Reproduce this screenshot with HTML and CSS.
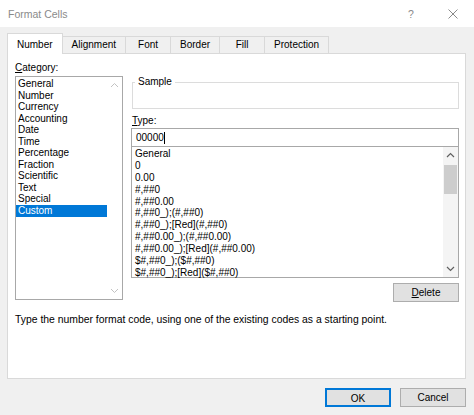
FILE: index.html
```html
<!DOCTYPE html>
<html lang="en">
<head>
<meta charset="utf-8">
<title>Format Cells</title>
<link rel="stylesheet" href="styles.css">
</head>
<body>
<div class="dialog">
  <div class="titlebar">
    <span class="title">Format Cells</span>
    <span class="tb-btn">?</span>
    <span class="tb-btn">
      <svg width="10" height="10" viewBox="0 0 10 10"><path d="M0.5 0.5 L9.5 9.5 M9.5 0.5 L0.5 9.5" stroke="#8a8a8a" stroke-width="1" fill="none"/></svg>
    </span>
  </div>

  <div class="tabs">
    <div class="tab active">Number</div>
    <div class="tab">Alignment</div>
    <div class="tab">Font</div>
    <div class="tab">Border</div>
    <div class="tab">Fill</div>
    <div class="tab">Protection</div>
  </div>

  <div class="panel">
    <div class="columns">
      <div class="col-left">
        <div class="label"><u>C</u>ategory:</div>
        <div class="listbox cat">
          <ul class="items">
            <li>General</li>
            <li>Number</li>
            <li>Currency</li>
            <li>Accounting</li>
            <li>Date</li>
            <li>Time</li>
            <li>Percentage</li>
            <li>Fraction</li>
            <li>Scientific</li>
            <li>Text</li>
            <li>Special</li>
            <li class="selected">Custom</li>
          </ul>
          <div class="vscroll plain">
            <svg class="arrow" width="9" height="6" viewBox="0 0 9 6"><polyline points="1,5 4.5,1.5 8,5" fill="none" stroke="#c2c2c2" stroke-width="1"/></svg>
            <div class="track"></div>
            <svg class="arrow" width="9" height="6" viewBox="0 0 9 6"><polyline points="1,1 4.5,4.5 8,1" fill="none" stroke="#c2c2c2" stroke-width="1"/></svg>
          </div>
        </div>
      </div>

      <div class="col-right">
        <fieldset class="sample"><legend>Sample</legend></fieldset>
        <div class="label type-label"><u>T</u>ype:</div>
        <div class="input">00000<span class="caret"></span></div>
        <div class="listbox fmt">
          <ul class="items">
            <li>General</li>
            <li>0</li>
            <li>0.00</li>
            <li>#,##0</li>
            <li>#,##0.00</li>
            <li>#,##0_);(#,##0)</li>
            <li>#,##0_);[Red](#,##0)</li>
            <li>#,##0.00_);(#,##0.00)</li>
            <li>#,##0.00_);[Red](#,##0.00)</li>
            <li>$#,##0_);($#,##0)</li>
            <li>$#,##0_);[Red]($#,##0)</li>
          </ul>
          <div class="vscroll">
            <svg class="arrow" width="9" height="6" viewBox="0 0 9 6"><polyline points="1,5 4.5,1.5 8,5" fill="none" stroke="#606060" stroke-width="1.2"/></svg>
            <div class="track"><div class="thumb"></div></div>
            <svg class="arrow" width="9" height="6" viewBox="0 0 9 6"><polyline points="1,1 4.5,4.5 8,1" fill="none" stroke="#606060" stroke-width="1.2"/></svg>
          </div>
        </div>
        <div class="delete-row"><button class="btn"><u>D</u>elete</button></div>
      </div>
    </div>
    <p class="desc">Type the number format code, using one of the existing codes as a starting point.</p>
  </div>

  <div class="footer">
    <button class="btn default">OK</button>
    <button class="btn">Cancel</button>
  </div>
</div>
</body>
</html>
```

FILE: styles.css
```css
* { box-sizing: border-box; }
html, body { margin: 0; padding: 0; }
body {
  background: #f0f0f0;
  font-family: "Liberation Sans", Arial, sans-serif;
  font-size: 10px;
  color: #000;
}
u { text-decoration-thickness: 1px; text-underline-offset: 1px; }

.dialog { width: 474px; height: 415px; background: #f0f0f0; overflow: hidden; }

.titlebar { height: 27px; background: #fff; display: flex; align-items: center; padding-left: 8px; }
.title { flex: 1; color: #8a8a8a; font-size: 10.5px; }
.tb-btn { width: 42px; height: 27px; display: flex; align-items: center; justify-content: center; color: #8a8a8a; font-size: 10.5px; }

.tabs { display: flex; align-items: flex-end; height: 26px; padding: 6px 0 0 7px; }
.tab {
  height: 17px; min-width: 46px; padding: 0 9px;
  display: flex; align-items: center; justify-content: center;
  border: 1px solid #d9d9d9; border-bottom: none; margin-left: -1px;
  background: #f0f0f0; line-height: 12px;
}
.tab.active {
  height: 21px; margin-left: 0; margin-bottom: -1px;
  background: #fff; position: relative; z-index: 1; align-items: flex-start; padding-top: 5px;
}

.panel {
  margin-left: 7px; width: 459px; height: 326px;
  background: #fff; border: 1px solid #d9d9d9;
  padding: 8px 6px 0 7px;
}
.columns { display: grid; grid-template-columns: 108px 328px; column-gap: 8px; }
.label { height: 12px; line-height: 12px; }

.listbox { border: 1px solid #a8a8a8; display: flex; background: #fff; }
.items { list-style: none; margin: 0; padding: 1px 0 0 0; flex: 1; }
.cat { margin-top: 2px; height: 224px; }
.cat .items li { line-height: 11.55px; height: 11.55px; padding-left: 2px; white-space: nowrap; }
.cat .items li.selected { background: #0078d7; color: #fff; }

.vscroll { width: 15px; display: flex; flex-direction: column; align-items: center; }
.vscroll .arrow { flex: none; margin: 5px 0; }
.vscroll .track { flex: 1; width: 100%; }

.fmt .vscroll { background: #f4f4f4; width: 15px; }
.fmt .thumb { margin: 2px 1px 0 1px; height: 29px; background: #cdcdcd; }

.col-right { padding-top: 14px; }
.sample {
  margin: 0 0 0 1px; padding: 0; height: 33px;
  border: 1px solid #dcdcdc;
}
.sample legend { margin-left: 2px; padding: 0 3px; line-height: 12px; }

.type-label { margin-top: 6px; padding-left: 1px; }
.input {
  margin-top: 1px; height: 19px; border: 1px solid #a8a8a8;
  padding-left: 4px; line-height: 17px; display: flex; align-items: center;
}
.caret { display: inline-block; width: 1px; height: 12px; background: #000; }

.fmt { margin-top: -1px; height: 132px; }
.fmt .items { padding-left: 3px; }
.fmt .items li { line-height: 11.9px; height: 11.9px; white-space: nowrap; }

.delete-row { display: flex; justify-content: flex-end; margin-top: 5px; }

.btn {
  font: inherit; color: #000; background: #e1e1e1;
  border: 1px solid #adadad; width: 66px; height: 19px; padding: 0; line-height: 17px;
}
.btn.default { border: 2px solid #0078d7; }

.desc { margin: 12px 0 0 0; line-height: 12px; font-size: 10.4px; }

.footer { display: flex; justify-content: flex-end; gap: 9px; padding: 9px 8px 0 0; }
```
